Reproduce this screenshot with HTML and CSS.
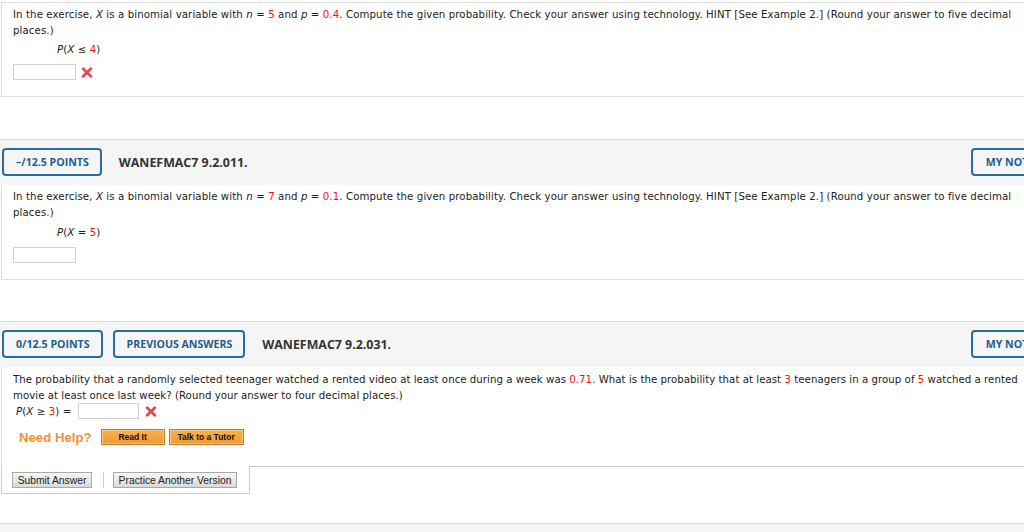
FILE: index.html
```html
<!DOCTYPE html>
<html lang="en">
<head>
<meta charset="utf-8">
<title>WebAssign</title>
<link rel="stylesheet" href="styles.css">
</head>
<body>
<div class="page">
  <section class="qbody first">
    <p class="prompt">In the exercise, <i>X</i> is a binomial variable with <i>n</i> = <span class="red">5</span> and <i>p</i> = <span class="red">0.4</span>. Compute the given probability. Check your answer using technology. HINT [See Example 2.] (Round your answer to five decimal places.)</p>
    <p class="expr"><i>P</i>(<i>X</i> ≤ <span class="red">4</span>)</p>
    <div class="answer">
      <input class="box" type="text" aria-label="answer">
      <svg class="wrong" width="12" height="11" viewBox="0 0 12 11"><path d="M2.2 1.8 L9.8 9.2 M9.8 1.8 L2.2 9.2" stroke="#e4484d" stroke-width="2.8" stroke-linecap="round"/></svg>
    </div>
  </section>

  <header class="qhead">
    <span class="pill">–/12.5 POINTS</span>
    <span class="title">WANEFMAC7 9.2.011.</span>
    <span class="pill notes">MY NOTES</span>
  </header>
  <section class="qbody closed">
    <p class="prompt">In the exercise, <i>X</i> is a binomial variable with <i>n</i> = <span class="red">7</span> and <i>p</i> = <span class="red">0.1</span>. Compute the given probability. Check your answer using technology. HINT [See Example 2.] (Round your answer to five decimal places.)</p>
    <p class="expr"><i>P</i>(<i>X</i> = <span class="red">5</span>)</p>
    <div class="answer">
      <input class="box" type="text" aria-label="answer">
    </div>
  </section>

  <header class="qhead">
    <span class="pill">0/12.5 POINTS</span>
    <span class="pill">PREVIOUS ANSWERS</span>
    <span class="title">WANEFMAC7 9.2.031.</span>
    <span class="pill notes">MY NOTES</span>
  </header>
  <section class="qbody open">
    <p class="prompt">The probability that a randomly selected teenager watched a rented video at least once during a week was <span class="red">0.71</span>. What is the probability that at least <span class="red">3</span> teenagers in a group of <span class="red">5</span> watched a rented movie at least once last week? (Round your answer to four decimal places.)</p>
    <div class="prow">
      <span class="plabel"><i>P</i>(<i>X</i> ≥ <span class="red">3</span>) =</span>
      <input class="box short" type="text" aria-label="answer">
      <svg class="wrong" width="12" height="11" viewBox="0 0 12 11"><path d="M2.2 1.8 L9.8 9.2 M9.8 1.8 L2.2 9.2" stroke="#e4484d" stroke-width="2.8" stroke-linecap="round"/></svg>
    </div>
    <div class="help">
      <span class="needhelp">Need Help?</span>
      <span class="orange read">Read It</span>
      <span class="orange tutor">Talk to a Tutor</span>
    </div>
  </section>
  <div class="actions">
    <div class="tab">
      <span class="gbtn submit">Submit Answer</span>
      <span class="sep"></span>
      <span class="gbtn practice">Practice Another Version</span>
    </div>
    <div class="rest"></div>
  </div>

  <header class="qhead next"></header>
</div>
</body>
</html>
```

FILE: styles.css
```css
html, body {
  margin: 0;
  padding: 0;
  background: #fff;
  overflow: hidden;
}
body {
  font-family: "DejaVu Sans", Verdana, sans-serif;
  font-size: 10.2px;
  letter-spacing: 0.1px;
  color: #222;
}
.page {
  width: 1040px;
}
.red { color: #ee1111; }
i { font-style: italic; }

.qbody {
  margin-left: 1px;
  border-left: 1px solid #dedede;
  padding: 4px 0 16px 11px;
}
.first {
  margin-top: 2px;
  border-top: 1px solid #dedede;
  border-bottom: 1px solid #dedede;
}
.closed {
  border-bottom: 1px solid #dedede;
}
.open {
  padding-top: 5px;
  padding-bottom: 21px;
}
.prompt {
  margin: 0;
  line-height: 16px;
}
.open .prompt {
  letter-spacing: 0.04px;
}
.expr {
  margin: 4px 0 0 44px;
  line-height: 16px;
}
.first .expr { margin-top: 3px; }
.answer {
  display: flex;
  align-items: center;
  gap: 5px;
  margin-top: 6px;
  height: 16px;
}
.box {
  display: block;
  width: 63px;
  height: 16px;
  box-sizing: border-box;
  border: 1px solid #d2d2d2;
  background: #fff;
  margin: 0;
  padding: 0;
}
.box.short { width: 61px; }
.wrong { display: block; }

.qhead {
  margin-top: 42px;
  border-top: 1px solid #dcdcdc;
  background: #f5f5f5;
  display: flex;
  align-items: center;
  gap: 10px;
  padding: 8px 0 9px 2px;
  font-family: "Open Sans", sans-serif;
  letter-spacing: 0;
}
.closed + .qhead { margin-top: 41px; }
.pill {
  display: flex;
  align-items: center;
  height: 28px;
  box-sizing: border-box;
  border: 2px solid #2a6c9d;
  border-radius: 4px;
  padding: 0 11px 0 12px;
  font-size: 10.6px;
  font-weight: 700;
  color: #1e5e8e;
  white-space: nowrap;
}
.title {
  margin-left: 7px;
  font-size: 12.4px;
  font-weight: 700;
  color: #333;
}
.notes {
  margin-left: auto;
  margin-right: -14px;
  padding: 0 12px 0 13px;
}

.prow {
  display: flex;
  align-items: center;
  gap: 7px;
  height: 16px;
  margin-top: -1px;
  padding-left: 3px;
}
.prow .wrong { margin-left: -1px; }
.help {
  display: flex;
  align-items: center;
  height: 16px;
  margin-top: 10px;
  padding-left: 6px;
}
.needhelp {
  font-family: "Liberation Sans", Arial, sans-serif;
  font-weight: 700;
  font-size: 13.2px;
  letter-spacing: 0;
  color: #f39035;
  margin-right: 9px;
}
.orange {
  display: flex;
  align-items: center;
  justify-content: center;
  height: 16px;
  box-sizing: border-box;
  border: 1px solid #c27a34;
  box-shadow: inset 0 0 0 1px #fbc57a;
  background: linear-gradient(#f9b052, #f29a34);
  font-family: "Liberation Sans", Arial, sans-serif;
  font-weight: 700;
  font-size: 8.5px;
  letter-spacing: 0;
  color: #111;
}
.read { width: 64px; margin-right: 4px; }
.tutor { width: 75px; }

.actions {
  display: flex;
}
.tab {
  margin-left: 1px;
  width: 249px;
  box-sizing: border-box;
  border-left: 1px solid #cfcfcf;
  border-right: 1px solid #cfcfcf;
  border-bottom: 1px solid #cfcfcf;
  padding: 6px 0 5px 10px;
  display: flex;
  align-items: center;
}
.rest {
  flex: 1;
  border-top: 1px solid #c8c8c8;
}
.gbtn {
  display: flex;
  align-items: center;
  justify-content: center;
  height: 16px;
  box-sizing: border-box;
  border: 1px solid #a8a8a8;
  background: linear-gradient(#f6f6f6, #dadada);
  font-family: "Liberation Sans", Arial, sans-serif;
  font-size: 10.3px;
  letter-spacing: 0;
  color: #222;
}
.submit { width: 80px; }
.practice { width: 124px; }
.sep {
  width: 1px;
  height: 16px;
  background: #cfcfcf;
  margin: 0 9px 0 11px;
}

.qhead.next {
  margin-top: 29px;
  height: 20px;
  padding: 0;
}
```
